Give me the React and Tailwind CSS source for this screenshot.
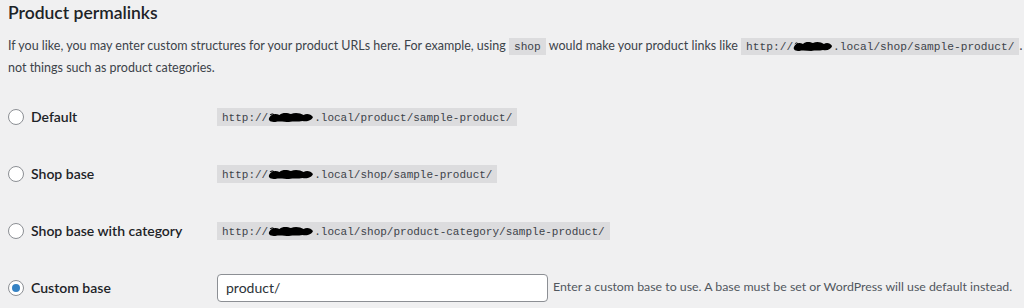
import React from "react";

const Blob = ({ w = 44 }) => (
  <svg
    width={w}
    height="12"
    viewBox="0 0 44 12"
    preserveAspectRatio="none"
    className="inline-block align-[-2px]"
  >
    <path
      d="M1 7 C3 3 7 2 11 4 C14 1 19 2 22 3 C26 1 31 2 34 4 C37 2 41 3 43 6 C42 9 38 11 33 10 C29 11 24 10 20 11 C16 11 11 10 7 11 C3 11 0 10 1 7 Z"
      fill="#000"
    />
    <path d="M2 4 C4 2 6 3 5 5" stroke="#000" strokeWidth="1" fill="none" />
  </svg>
);

const Code = ({ children, className = "" }) => (
  <code
    className={
      "bg-[#dcdcde] px-[5px] pt-[3px] pb-[2px] leading-none text-[#3c434a] " +
      className
    }
    style={{ fontFamily: '"Liberation Mono", "DejaVu Sans Mono", monospace' }}
  >
    {children}
  </code>
);

const Radio = ({ checked }) => (
  <span className="flex h-4 w-4 shrink-0 items-center justify-center rounded-full border border-[#8c8f94] bg-white">
    {checked && <span className="h-2 w-2 rounded-full bg-[#3582c4]" />}
  </span>
);

const Row = ({ label, checked, children }) => (
  <div className="flex h-[57px] items-center">
    <div className="flex w-[209px] shrink-0 items-center gap-[7px]">
      <Radio checked={checked} />
      <span className="text-[14px] font-semibold text-[#1d2327]">{label}</span>
    </div>
    {children}
  </div>
);

export default function App() {
  return (
    <div
      className="h-[308px] w-[1024px] overflow-hidden bg-[#f0f0f1] pl-2"
      style={{ fontFamily: 'Lato, "Open Sans", sans-serif' }}
    >
      <h2 className="pt-px text-[17.5px] font-semibold leading-[24px] text-[#1d2327]">
        Product permalinks
      </h2>
      <p className="mt-[10px] w-[1400px] text-[12.5px] leading-[22px] text-[#3c434a]">
        <span className="whitespace-nowrap">
          If you like, you may enter custom structures for your product URLs
          here. For example, using <Code className="text-[11.2px]">shop</Code>{" "}
          would make your product links like{" "}
          <Code className="text-[11.2px]">
            http://
            <Blob w={40} />
            .local/shop/sample-product/
          </Code>
          . This setting affects product URLs only,
        </span>
        <br />
        not things such as product categories.
      </p>
      <div className="mt-[9px]">
        <Row label="Default">
          <Code className="py-[4px] text-[11px]">
            http://
            <Blob w={46} />
            .local/product/sample-product/
          </Code>
        </Row>
        <Row label="Shop base">
          <Code className="py-[4px] text-[11px]">
            http://
            <Blob w={46} />
            .local/shop/sample-product/
          </Code>
        </Row>
        <Row label="Shop base with category">
          <Code className="py-[4px] text-[11px]">
            http://
            <Blob w={46} />
            .local/shop/product-category/sample-product/
          </Code>
        </Row>
        <Row label="Custom base" checked>
          <div className="flex h-[28px] w-[331px] shrink-0 items-center rounded-[4px] border border-[#8c8f94] bg-white px-2 text-[14px] text-[#2c3338]">
            product/
          </div>
          <span className="ml-[5px] whitespace-nowrap text-[12.35px] text-[#50575e]">
            Enter a custom base to use. A base must be set or WordPress will
            use default instead.
          </span>
        </Row>
      </div>
    </div>
  );
}
